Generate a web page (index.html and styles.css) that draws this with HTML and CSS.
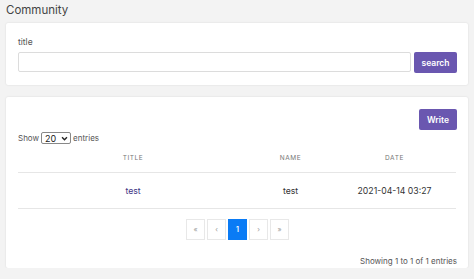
FILE: index.html
```html
<!DOCTYPE html>
<html>
<head>
<meta charset="utf-8">
<link rel="stylesheet" href="styles.css">
</head>
<body>
<div class="page">
  <h1 class="page-title">Community</h1>
  <section class="card search-card">
    <label class="field-label">title</label>
    <div class="search-row">
      <input class="text-input" type="text">
      <button class="btn">search</button>
    </div>
  </section>
  <section class="card list-card">
    <div class="toolbar">
      <button class="btn">Write</button>
    </div>
    <div class="length">
      Show
      <span class="select">20 <svg class="chev" viewBox="0 0 10 10" width="7" height="7"><path d="M1.5 3.2 L5 6.7 L8.5 3.2" fill="none" stroke="#222" stroke-width="2"/></svg></span>
      entries
    </div>
    <table class="grid">
      <colgroup><col class="c1"><col class="c2"><col class="c3"></colgroup>
      <thead>
        <tr><th>TITLE</th><th>NAME</th><th>DATE</th></tr>
      </thead>
      <tbody>
        <tr><td><a class="link">test</a></td><td>test</td><td>2021-04-14 03:27</td></tr>
      </tbody>
    </table>
    <div class="pager">
      <span class="pg">«</span>
      <span class="pg">‹</span>
      <span class="pg active">1</span>
      <span class="pg">›</span>
      <span class="pg">»</span>
    </div>
    <div class="info">Showing 1 to 1 of 1 entries</div>
  </section>
</div>
</body>
</html>
```
FILE: styles.css
```css
html, body {
  margin: 0;
  padding: 0;
  background: #f3f3f3;
  font-family: Inter, "Noto Sans", sans-serif;
  color: #333;
}
.page {
  padding: 0 6px;
  width: 462px;
}
.page-title {
  margin: 0;
  height: 23px;
  font-size: 11.5px;
  font-weight: 400;
  line-height: 21px;
  color: #444;
}
.card {
  background: #fff;
  box-shadow: 0 0 2px rgba(0,0,0,0.12);
  border-radius: 2px;
}
.search-card {
  height: 62px;
  box-sizing: border-box;
  padding: 13px 11px 0 12px;
}
.field-label {
  display: block;
  font-size: 8.5px;
  color: #555;
  line-height: 12px;
  height: 16px;
}
.search-row {
  display: flex;
  gap: 3px;
}
.text-input {
  flex: 1;
  height: 20px;
  box-sizing: border-box;
  border: 1px solid #dcdcdc;
  border-radius: 2px;
  margin: 0;
}
.btn {
  background: #6a57b0;
  color: #fff;
  border: none;
  border-radius: 2px;
  font-family: Inter, "Noto Sans", sans-serif;
  font-weight: 600;
  font-size: 8.5px;
  height: 21px;
  padding: 0;
  width: 43px;
}
.list-card {
  margin-top: 12px;
  height: 171px;
  box-sizing: border-box;
  padding: 12px 11px 0 12px;
}
.toolbar {
  display: flex;
  justify-content: flex-end;
  height: 21px;
}
.toolbar .btn { width: 38px; }
.length {
  margin-top: 2px;
  height: 12px;
  display: flex;
  align-items: center;
  gap: 2px;
  font-size: 8px;
  color: #555;
}
.select {
  display: inline-flex;
  align-items: center;
  justify-content: space-between;
  box-sizing: border-box;
  width: 30px;
  height: 12px;
  border: 1px solid #888;
  border-radius: 2px;
  padding: 0 2px 0 3px;
  font-size: 9px;
  color: #222;
}
.grid {
  width: 438px;
  border-collapse: collapse;
  table-layout: fixed;
  margin-top: 0;
}
.c1 { width: 230px; }
.c2 { width: 85px; }
.c3 { width: 123px; }
.grid th {
  height: 28px;
  padding: 0;
  font-size: 6.5px;
  font-weight: 400;
  letter-spacing: 0.6px;
  color: #777;
  border-bottom: 1px solid #e6e6e6;
  text-align: center;
}
.grid td {
  height: 35px;
  padding: 0;
  font-size: 8.7px;
  color: #333;
  border-bottom: 1px solid #e6e6e6;
  text-align: center;
}
.link { color: #3e3585; }
.pager {
  margin-top: 10px;
  display: flex;
  justify-content: center;
  gap: 2px;
}
.pg {
  box-sizing: border-box;
  width: 19px;
  height: 21px;
  border: 1px solid #e8e8e8;
  display: flex;
  align-items: center;
  justify-content: center;
  font-size: 7px;
  color: #999;
}
.pg.active {
  background: #0a7bf5;
  border-color: #0a7bf5;
  color: #fff;
  font-weight: 600;
}
.info {
  margin-top: 16px;
  text-align: right;
  font-size: 8px;
  color: #555;
}
```
